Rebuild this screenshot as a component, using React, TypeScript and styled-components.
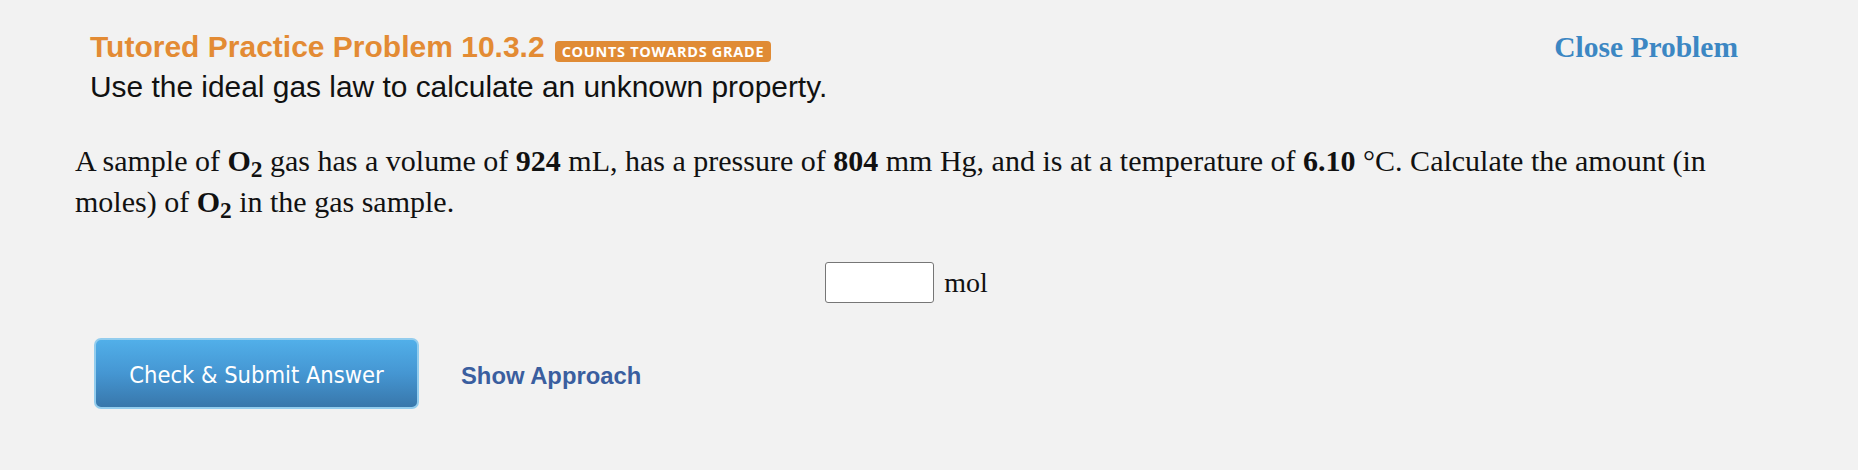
import React from "react";
import styled, { createGlobalStyle } from "styled-components";

const GlobalStyle = createGlobalStyle`
    html, body {
        margin: 0;
        padding: 0;
        background: #f2f2f2;
    }
`;

export default function App() {
    return (
        <>
            <GlobalStyle />
            <Page>
                <Header>
                    <Heading>
                        <Title>
                            Tutored Practice Problem 10.3.2
                            <Badge>Counts towards grade</Badge>
                        </Title>
                        <Subtitle>Use the ideal gas law to calculate an unknown property.</Subtitle>
                    </Heading>
                    <CloseLink href="#">Close Problem</CloseLink>
                </Header>

                <Question>
                    A sample of <b>O<Sub>2</Sub></b> gas has a volume of <b>924</b> mL, has a pressure of{" "}
                    <b>804</b> mm Hg, and is at a temperature of <b>6.10</b> °C. Calculate the amount (in
                    moles) of <b>O<Sub>2</Sub></b> in the gas sample.
                </Question>

                <AnswerRow>
                    <AnswerInput type="text" aria-label="amount in moles" />
                    <Unit>mol</Unit>
                </AnswerRow>

                <Actions>
                    <SubmitButton type="button">Check &amp; Submit Answer</SubmitButton>
                    <ApproachLink href="#">Show Approach</ApproachLink>
                </Actions>
            </Page>
        </>
    );
}

const Page = styled.main`
    height: 470px;
    box-sizing: border-box;
    padding: 27px 120px 0 75px;
`;

const Header = styled.header`
    display: flex;
    justify-content: space-between;
    align-items: baseline;
`;

const Heading = styled.div`
    padding-left: 15px;
`;

const Title = styled.h1`
    margin: 0;
    font-family: "Liberation Sans", Arial, sans-serif;
    font-size: 30px;
    line-height: 40px;
    font-weight: 700;
    color: #e38b34;
`;

const Badge = styled.span`
    display: inline-block;
    margin-left: 10px;
    padding: 0 7px;
    height: 21px;
    line-height: 21px;
    border-radius: 4px;
    background: #e08b35;
    color: #fff;
    font-family: "Open Sans", sans-serif;
    font-size: 14.5px;
    font-weight: 700;
    letter-spacing: 0.7px;
    text-transform: uppercase;
`;

const Subtitle = styled.p`
    margin: 0;
    font-family: "Liberation Sans", Arial, sans-serif;
    font-size: 29.9px;
    line-height: 40px;
    color: #111;
`;

const CloseLink = styled.a`
    font-family: "Liberation Serif", "Times New Roman", serif;
    font-size: 29.5px;
    font-weight: 700;
    color: #3c87c3;
    text-decoration: none;
`;

const Question = styled.p`
    margin: 33px 0 0;
    font-family: "Liberation Serif", "Times New Roman", serif;
    font-size: 30px;
    line-height: 41px;
    color: #111;

    b {
        font-weight: 700;
    }
`;

const Sub = styled.sub`
    font-size: 0.78em;
    line-height: 0;
    vertical-align: baseline;
    position: relative;
    top: 0.24em;
`;

const AnswerRow = styled.div`
    display: flex;
    justify-content: center;
    align-items: center;
    gap: 10px;
    margin-top: 40px;
`;

const AnswerInput = styled.input`
    width: 109px;
    height: 41px;
    box-sizing: border-box;
    border: 1px solid #767676;
    border-radius: 3px;
    background: #fff;
    padding: 0 6px;
    font-size: 22px;
`;

const Unit = styled.span`
    font-family: "Liberation Serif", "Times New Roman", serif;
    font-size: 28px;
    color: #111;
`;

const Actions = styled.div`
    display: flex;
    align-items: center;
    gap: 42px;
    margin-top: 35px;
    padding-left: 19px;
`;

const SubmitButton = styled.button`
    width: 325px;
    height: 71px;
    box-sizing: border-box;
    border: 2px solid #93cdee;
    border-radius: 7px;
    padding: 3px 0 0;
    background: linear-gradient(to bottom, #51afe9 0%, #4596d2 50%, #3877ab 100%);
    color: #fff;
    font-family: "DejaVu Sans Condensed", "DejaVu Sans", sans-serif;
    font-stretch: condensed;
    font-size: 23.5px;
    cursor: pointer;
`;

const ApproachLink = styled.a`
    padding-top: 4px;
    font-family: "Liberation Sans", Arial, sans-serif;
    font-size: 23.8px;
    font-weight: 700;
    color: #3a5e9f;
    text-decoration: none;
`;
